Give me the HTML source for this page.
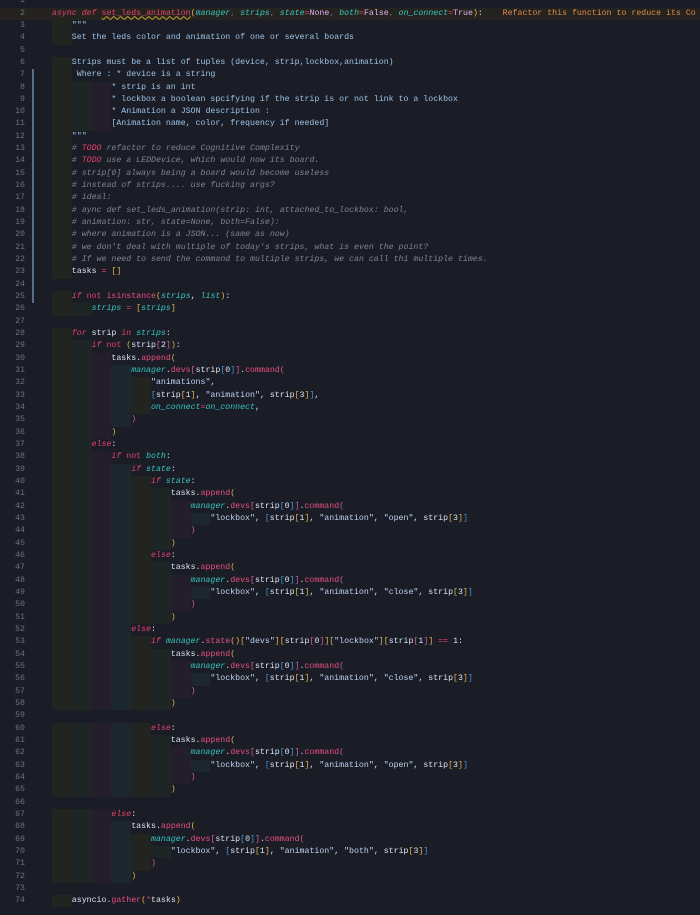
<!DOCTYPE html>
<html><head><meta charset="utf-8"><style>
html,body{margin:0;padding:0;background:#1a1c26;width:700px;height:909px;overflow:hidden}
#w{position:absolute;top:-4.8px;left:0;width:700px;height:920px;overflow:hidden}
.l{position:relative;height:12.333px;line-height:12.333px;font-family:"Liberation Mono",monospace;font-size:8.25px;color:#dde3ee;white-space:pre}
.ln{position:absolute;right:675px;color:#6b7282;text-align:right}
.cd{position:absolute;left:52px;top:0}
.cur{background:#25231f}
i.g{display:inline-block;width:19.8px;height:12.333px;vertical-align:top}
.g0{background:#22241f}.g1{background:#1e2625}.g2{background:#241e2c}.g3{background:#1d272e}
.bar{position:absolute;left:32px;top:0;width:2px;height:12.333px;background:#5b6b8c}
.k{color:#e8416b;font-style:italic}.kn{color:#e8416b}
.f{color:#e8416b;text-decoration:underline wavy #c9a82e;text-decoration-thickness:1px}
.p{color:#36c8c0;font-style:italic}.o{color:#e8416b}.c{color:#e0b0ec}
.s{color:#c2d4f2}.d{color:#9ec4e6}.cm{color:#7d8597;font-style:italic}.t{color:#e8416b;font-style:italic}
.m{color:#ea4f7f}.b1{color:#e2b84d}.b2{color:#d05fa6}.b3{color:#3d9ae0}.gr{color:#6b7282}
.w{color:#e08a4a}
</style></head><body><div id="w">
<div class="l"><span class="ln">1</span></div>
<div class="l cur"><span class="ln">2</span><span class="cd"><span class="k">async def</span> <span class="f">set_leds_animation</span><span class="b1">(</span><span class="p">manager</span><span class="gr">,</span> <span class="p">strips</span><span class="gr">,</span> <span class="p">state</span><span class="o">=</span><span class="c">None</span><span class="gr">,</span> <span class="p">both</span><span class="o">=</span><span class="c">False</span><span class="gr">,</span> <span class="p">on_connect</span><span class="o">=</span><span class="c">True</span><span class="b1">)</span>:    <span class="w">Refactor this function to reduce its Co</span></span></div>
<div class="l"><span class="ln">3</span><span class="cd"><i class="g g0"></i><span class="d">"""</span></span></div>
<div class="l"><span class="ln">4</span><span class="cd"><i class="g g0"></i><span class="d">Set the leds color and animation of one or several boards</span></span></div>
<div class="l"><span class="ln">5</span></div>
<div class="l"><span class="ln">6</span><span class="cd"><i class="g g0"></i><span class="d">Strips must be a list of tuples (device, strip,lockbox,animation)</span></span></div>
<div class="l"><span class="ln">7</span><span class="bar"></span><span class="cd"><i class="g g0"></i><span class="d"> Where : * device is a string</span></span></div>
<div class="l"><span class="ln">8</span><span class="bar"></span><span class="cd"><i class="g g0"></i><i class="g g1"></i><i class="g g2"></i><span class="d">* strip is an int</span></span></div>
<div class="l"><span class="ln">9</span><span class="bar"></span><span class="cd"><i class="g g0"></i><i class="g g1"></i><i class="g g2"></i><span class="d">* lockbox a boolean spcifying if the strip is or not link to a lockbox</span></span></div>
<div class="l"><span class="ln">10</span><span class="bar"></span><span class="cd"><i class="g g0"></i><i class="g g1"></i><i class="g g2"></i><span class="d">* Animation a JSON description :</span></span></div>
<div class="l"><span class="ln">11</span><span class="bar"></span><span class="cd"><i class="g g0"></i><i class="g g1"></i><i class="g g2"></i><span class="d">[Animation name, color, frequency if needed]</span></span></div>
<div class="l"><span class="ln">12</span><span class="bar"></span><span class="cd"><i class="g g0"></i><span class="d">"""</span></span></div>
<div class="l"><span class="ln">13</span><span class="bar"></span><span class="cd"><i class="g g0"></i><span class="cm"># </span><span class="t">TODO</span><span class="cm"> refactor to reduce Cognitive Complexity</span></span></div>
<div class="l"><span class="ln">14</span><span class="bar"></span><span class="cd"><i class="g g0"></i><span class="cm"># </span><span class="t">TODO</span><span class="cm"> use a LEDDevice, which would now its board.</span></span></div>
<div class="l"><span class="ln">15</span><span class="bar"></span><span class="cd"><i class="g g0"></i><span class="cm"># strip[0] always being a board would become useless</span></span></div>
<div class="l"><span class="ln">16</span><span class="bar"></span><span class="cd"><i class="g g0"></i><span class="cm"># instead of strips.... use fucking args?</span></span></div>
<div class="l"><span class="ln">17</span><span class="bar"></span><span class="cd"><i class="g g0"></i><span class="cm"># ideal:</span></span></div>
<div class="l"><span class="ln">18</span><span class="bar"></span><span class="cd"><i class="g g0"></i><span class="cm"># aync def set_leds_animation(strip: int, attached_to_lockbox: bool,</span></span></div>
<div class="l"><span class="ln">19</span><span class="bar"></span><span class="cd"><i class="g g0"></i><span class="cm"># animation: str, state=None, both=False):</span></span></div>
<div class="l"><span class="ln">20</span><span class="bar"></span><span class="cd"><i class="g g0"></i><span class="cm"># where animation is a JSON... (same as now)</span></span></div>
<div class="l"><span class="ln">21</span><span class="bar"></span><span class="cd"><i class="g g0"></i><span class="cm"># we don't deal with multiple of today's strips, what is even the point?</span></span></div>
<div class="l"><span class="ln">22</span><span class="bar"></span><span class="cd"><i class="g g0"></i><span class="cm"># If we need to send the command to multiple strips, we can call thi multiple times.</span></span></div>
<div class="l"><span class="ln">23</span><span class="bar"></span><span class="cd"><i class="g g0"></i>tasks <span class="o">=</span> <span class="b1">[]</span></span></div>
<div class="l"><span class="ln">24</span><span class="bar"></span></div>
<div class="l"><span class="ln">25</span><span class="bar"></span><span class="cd"><i class="g g0"></i><span class="k">if</span> <span class="kn">not</span> <span class="m">isinstance</span><span class="b1">(</span><span class="p">strips</span>, <span class="p">list</span><span class="b1">)</span>:</span></div>
<div class="l"><span class="ln">26</span><span class="cd"><i class="g g0"></i><i class="g g1"></i><span class="p">strips</span> <span class="o">=</span> <span class="b1">[</span><span class="p">strips</span><span class="b1">]</span></span></div>
<div class="l"><span class="ln">27</span></div>
<div class="l"><span class="ln">28</span><span class="cd"><i class="g g0"></i><span class="k">for</span> strip <span class="k">in</span> <span class="p">strips</span>:</span></div>
<div class="l"><span class="ln">29</span><span class="cd"><i class="g g0"></i><i class="g g1"></i><span class="k">if</span> <span class="kn">not</span> <span class="b1">(</span>strip<span class="b2">[</span>2<span class="b2">]</span><span class="b1">)</span>:</span></div>
<div class="l"><span class="ln">30</span><span class="cd"><i class="g g0"></i><i class="g g1"></i><i class="g g2"></i>tasks.<span class="m">append</span><span class="b1">(</span></span></div>
<div class="l"><span class="ln">31</span><span class="cd"><i class="g g0"></i><i class="g g1"></i><i class="g g2"></i><i class="g g3"></i><span class="p">manager</span>.<span class="m">devs</span><span class="b2">[</span>strip<span class="b3">[</span>0<span class="b3">]</span><span class="b2">]</span>.<span class="m">command</span><span class="b2">(</span></span></div>
<div class="l"><span class="ln">32</span><span class="cd"><i class="g g0"></i><i class="g g1"></i><i class="g g2"></i><i class="g g3"></i><i class="g g0"></i><span class="s">"animations"</span>,</span></div>
<div class="l"><span class="ln">33</span><span class="cd"><i class="g g0"></i><i class="g g1"></i><i class="g g2"></i><i class="g g3"></i><i class="g g0"></i><span class="b3">[</span>strip<span class="b1">[</span>1<span class="b1">]</span>, <span class="s">"animation"</span>, strip<span class="b1">[</span>3<span class="b1">]</span><span class="b3">]</span>,</span></div>
<div class="l"><span class="ln">34</span><span class="cd"><i class="g g0"></i><i class="g g1"></i><i class="g g2"></i><i class="g g3"></i><i class="g g0"></i><span class="p">on_connect</span><span class="o">=</span><span class="p">on_connect</span>,</span></div>
<div class="l"><span class="ln">35</span><span class="cd"><i class="g g0"></i><i class="g g1"></i><i class="g g2"></i><i class="g g3"></i><span class="b2">)</span></span></div>
<div class="l"><span class="ln">36</span><span class="cd"><i class="g g0"></i><i class="g g1"></i><i class="g g2"></i><span class="b1">)</span></span></div>
<div class="l"><span class="ln">37</span><span class="cd"><i class="g g0"></i><i class="g g1"></i><span class="k">else</span>:</span></div>
<div class="l"><span class="ln">38</span><span class="cd"><i class="g g0"></i><i class="g g1"></i><i class="g g2"></i><span class="k">if</span> <span class="kn">not</span> <span class="p">both</span>:</span></div>
<div class="l"><span class="ln">39</span><span class="cd"><i class="g g0"></i><i class="g g1"></i><i class="g g2"></i><i class="g g3"></i><span class="k">if</span> <span class="p">state</span>:</span></div>
<div class="l"><span class="ln">40</span><span class="cd"><i class="g g0"></i><i class="g g1"></i><i class="g g2"></i><i class="g g3"></i><i class="g g0"></i><span class="k">if</span> <span class="p">state</span>:</span></div>
<div class="l"><span class="ln">41</span><span class="cd"><i class="g g0"></i><i class="g g1"></i><i class="g g2"></i><i class="g g3"></i><i class="g g0"></i><i class="g g1"></i>tasks.<span class="m">append</span><span class="b1">(</span></span></div>
<div class="l"><span class="ln">42</span><span class="cd"><i class="g g0"></i><i class="g g1"></i><i class="g g2"></i><i class="g g3"></i><i class="g g0"></i><i class="g g1"></i><i class="g g2"></i><span class="p">manager</span>.<span class="m">devs</span><span class="b2">[</span>strip<span class="b3">[</span>0<span class="b3">]</span><span class="b2">]</span>.<span class="m">command</span><span class="b2">(</span></span></div>
<div class="l"><span class="ln">43</span><span class="cd"><i class="g g0"></i><i class="g g1"></i><i class="g g2"></i><i class="g g3"></i><i class="g g0"></i><i class="g g1"></i><i class="g g2"></i><i class="g g3"></i><span class="s">"lockbox"</span>, <span class="b3">[</span>strip<span class="b1">[</span>1<span class="b1">]</span>, <span class="s">"animation"</span>, <span class="s">"open"</span>, strip<span class="b1">[</span>3<span class="b1">]</span><span class="b3">]</span></span></div>
<div class="l"><span class="ln">44</span><span class="cd"><i class="g g0"></i><i class="g g1"></i><i class="g g2"></i><i class="g g3"></i><i class="g g0"></i><i class="g g1"></i><i class="g g2"></i><span class="b2">)</span></span></div>
<div class="l"><span class="ln">45</span><span class="cd"><i class="g g0"></i><i class="g g1"></i><i class="g g2"></i><i class="g g3"></i><i class="g g0"></i><i class="g g1"></i><span class="b1">)</span></span></div>
<div class="l"><span class="ln">46</span><span class="cd"><i class="g g0"></i><i class="g g1"></i><i class="g g2"></i><i class="g g3"></i><i class="g g0"></i><span class="k">else</span>:</span></div>
<div class="l"><span class="ln">47</span><span class="cd"><i class="g g0"></i><i class="g g1"></i><i class="g g2"></i><i class="g g3"></i><i class="g g0"></i><i class="g g1"></i>tasks.<span class="m">append</span><span class="b1">(</span></span></div>
<div class="l"><span class="ln">48</span><span class="cd"><i class="g g0"></i><i class="g g1"></i><i class="g g2"></i><i class="g g3"></i><i class="g g0"></i><i class="g g1"></i><i class="g g2"></i><span class="p">manager</span>.<span class="m">devs</span><span class="b2">[</span>strip<span class="b3">[</span>0<span class="b3">]</span><span class="b2">]</span>.<span class="m">command</span><span class="b2">(</span></span></div>
<div class="l"><span class="ln">49</span><span class="cd"><i class="g g0"></i><i class="g g1"></i><i class="g g2"></i><i class="g g3"></i><i class="g g0"></i><i class="g g1"></i><i class="g g2"></i><i class="g g3"></i><span class="s">"lockbox"</span>, <span class="b3">[</span>strip<span class="b1">[</span>1<span class="b1">]</span>, <span class="s">"animation"</span>, <span class="s">"close"</span>, strip<span class="b1">[</span>3<span class="b1">]</span><span class="b3">]</span></span></div>
<div class="l"><span class="ln">50</span><span class="cd"><i class="g g0"></i><i class="g g1"></i><i class="g g2"></i><i class="g g3"></i><i class="g g0"></i><i class="g g1"></i><i class="g g2"></i><span class="b2">)</span></span></div>
<div class="l"><span class="ln">51</span><span class="cd"><i class="g g0"></i><i class="g g1"></i><i class="g g2"></i><i class="g g3"></i><i class="g g0"></i><i class="g g1"></i><span class="b1">)</span></span></div>
<div class="l"><span class="ln">52</span><span class="cd"><i class="g g0"></i><i class="g g1"></i><i class="g g2"></i><i class="g g3"></i><span class="k">else</span>:</span></div>
<div class="l"><span class="ln">53</span><span class="cd"><i class="g g0"></i><i class="g g1"></i><i class="g g2"></i><i class="g g3"></i><i class="g g0"></i><span class="k">if</span> <span class="p">manager</span>.<span class="m">state</span><span class="b1">()[</span><span class="s">"devs"</span><span class="b1">][</span>strip<span class="b2">[</span>0<span class="b2">]</span><span class="b1">][</span><span class="s">"lockbox"</span><span class="b1">][</span>strip<span class="b2">[</span>1<span class="b2">]</span><span class="b1">]</span> <span class="o">==</span> 1:</span></div>
<div class="l"><span class="ln">54</span><span class="cd"><i class="g g0"></i><i class="g g1"></i><i class="g g2"></i><i class="g g3"></i><i class="g g0"></i><i class="g g1"></i>tasks.<span class="m">append</span><span class="b1">(</span></span></div>
<div class="l"><span class="ln">55</span><span class="cd"><i class="g g0"></i><i class="g g1"></i><i class="g g2"></i><i class="g g3"></i><i class="g g0"></i><i class="g g1"></i><i class="g g2"></i><span class="p">manager</span>.<span class="m">devs</span><span class="b2">[</span>strip<span class="b3">[</span>0<span class="b3">]</span><span class="b2">]</span>.<span class="m">command</span><span class="b2">(</span></span></div>
<div class="l"><span class="ln">56</span><span class="cd"><i class="g g0"></i><i class="g g1"></i><i class="g g2"></i><i class="g g3"></i><i class="g g0"></i><i class="g g1"></i><i class="g g2"></i><i class="g g3"></i><span class="s">"lockbox"</span>, <span class="b3">[</span>strip<span class="b1">[</span>1<span class="b1">]</span>, <span class="s">"animation"</span>, <span class="s">"close"</span>, strip<span class="b1">[</span>3<span class="b1">]</span><span class="b3">]</span></span></div>
<div class="l"><span class="ln">57</span><span class="cd"><i class="g g0"></i><i class="g g1"></i><i class="g g2"></i><i class="g g3"></i><i class="g g0"></i><i class="g g1"></i><i class="g g2"></i><span class="b2">)</span></span></div>
<div class="l"><span class="ln">58</span><span class="cd"><i class="g g0"></i><i class="g g1"></i><i class="g g2"></i><i class="g g3"></i><i class="g g0"></i><i class="g g1"></i><span class="b1">)</span></span></div>
<div class="l"><span class="ln">59</span></div>
<div class="l"><span class="ln">60</span><span class="cd"><i class="g g0"></i><i class="g g1"></i><i class="g g2"></i><i class="g g3"></i><i class="g g0"></i><span class="k">else</span>:</span></div>
<div class="l"><span class="ln">61</span><span class="cd"><i class="g g0"></i><i class="g g1"></i><i class="g g2"></i><i class="g g3"></i><i class="g g0"></i><i class="g g1"></i>tasks.<span class="m">append</span><span class="b1">(</span></span></div>
<div class="l"><span class="ln">62</span><span class="cd"><i class="g g0"></i><i class="g g1"></i><i class="g g2"></i><i class="g g3"></i><i class="g g0"></i><i class="g g1"></i><i class="g g2"></i><span class="p">manager</span>.<span class="m">devs</span><span class="b2">[</span>strip<span class="b3">[</span>0<span class="b3">]</span><span class="b2">]</span>.<span class="m">command</span><span class="b2">(</span></span></div>
<div class="l"><span class="ln">63</span><span class="cd"><i class="g g0"></i><i class="g g1"></i><i class="g g2"></i><i class="g g3"></i><i class="g g0"></i><i class="g g1"></i><i class="g g2"></i><i class="g g3"></i><span class="s">"lockbox"</span>, <span class="b3">[</span>strip<span class="b1">[</span>1<span class="b1">]</span>, <span class="s">"animation"</span>, <span class="s">"open"</span>, strip<span class="b1">[</span>3<span class="b1">]</span><span class="b3">]</span></span></div>
<div class="l"><span class="ln">64</span><span class="cd"><i class="g g0"></i><i class="g g1"></i><i class="g g2"></i><i class="g g3"></i><i class="g g0"></i><i class="g g1"></i><i class="g g2"></i><span class="b2">)</span></span></div>
<div class="l"><span class="ln">65</span><span class="cd"><i class="g g0"></i><i class="g g1"></i><i class="g g2"></i><i class="g g3"></i><i class="g g0"></i><i class="g g1"></i><span class="b1">)</span></span></div>
<div class="l"><span class="ln">66</span></div>
<div class="l"><span class="ln">67</span><span class="cd"><i class="g g0"></i><i class="g g1"></i><i class="g g2"></i><span class="k">else</span>:</span></div>
<div class="l"><span class="ln">68</span><span class="cd"><i class="g g0"></i><i class="g g1"></i><i class="g g2"></i><i class="g g3"></i>tasks.<span class="m">append</span><span class="b1">(</span></span></div>
<div class="l"><span class="ln">69</span><span class="cd"><i class="g g0"></i><i class="g g1"></i><i class="g g2"></i><i class="g g3"></i><i class="g g0"></i><span class="p">manager</span>.<span class="m">devs</span><span class="b2">[</span>strip<span class="b3">[</span>0<span class="b3">]</span><span class="b2">]</span>.<span class="m">command</span><span class="b2">(</span></span></div>
<div class="l"><span class="ln">70</span><span class="cd"><i class="g g0"></i><i class="g g1"></i><i class="g g2"></i><i class="g g3"></i><i class="g g0"></i><i class="g g1"></i><span class="s">"lockbox"</span>, <span class="b3">[</span>strip<span class="b1">[</span>1<span class="b1">]</span>, <span class="s">"animation"</span>, <span class="s">"both"</span>, strip<span class="b1">[</span>3<span class="b1">]</span><span class="b3">]</span></span></div>
<div class="l"><span class="ln">71</span><span class="cd"><i class="g g0"></i><i class="g g1"></i><i class="g g2"></i><i class="g g3"></i><i class="g g0"></i><span class="b2">)</span></span></div>
<div class="l"><span class="ln">72</span><span class="cd"><i class="g g0"></i><i class="g g1"></i><i class="g g2"></i><i class="g g3"></i><span class="b1">)</span></span></div>
<div class="l"><span class="ln">73</span></div>
<div class="l"><span class="ln">74</span><span class="cd"><i class="g g0"></i>asyncio.<span class="m">gather</span><span class="b1">(</span><span class="o">*</span>tasks<span class="b1">)</span></span></div>
</div></body></html>
